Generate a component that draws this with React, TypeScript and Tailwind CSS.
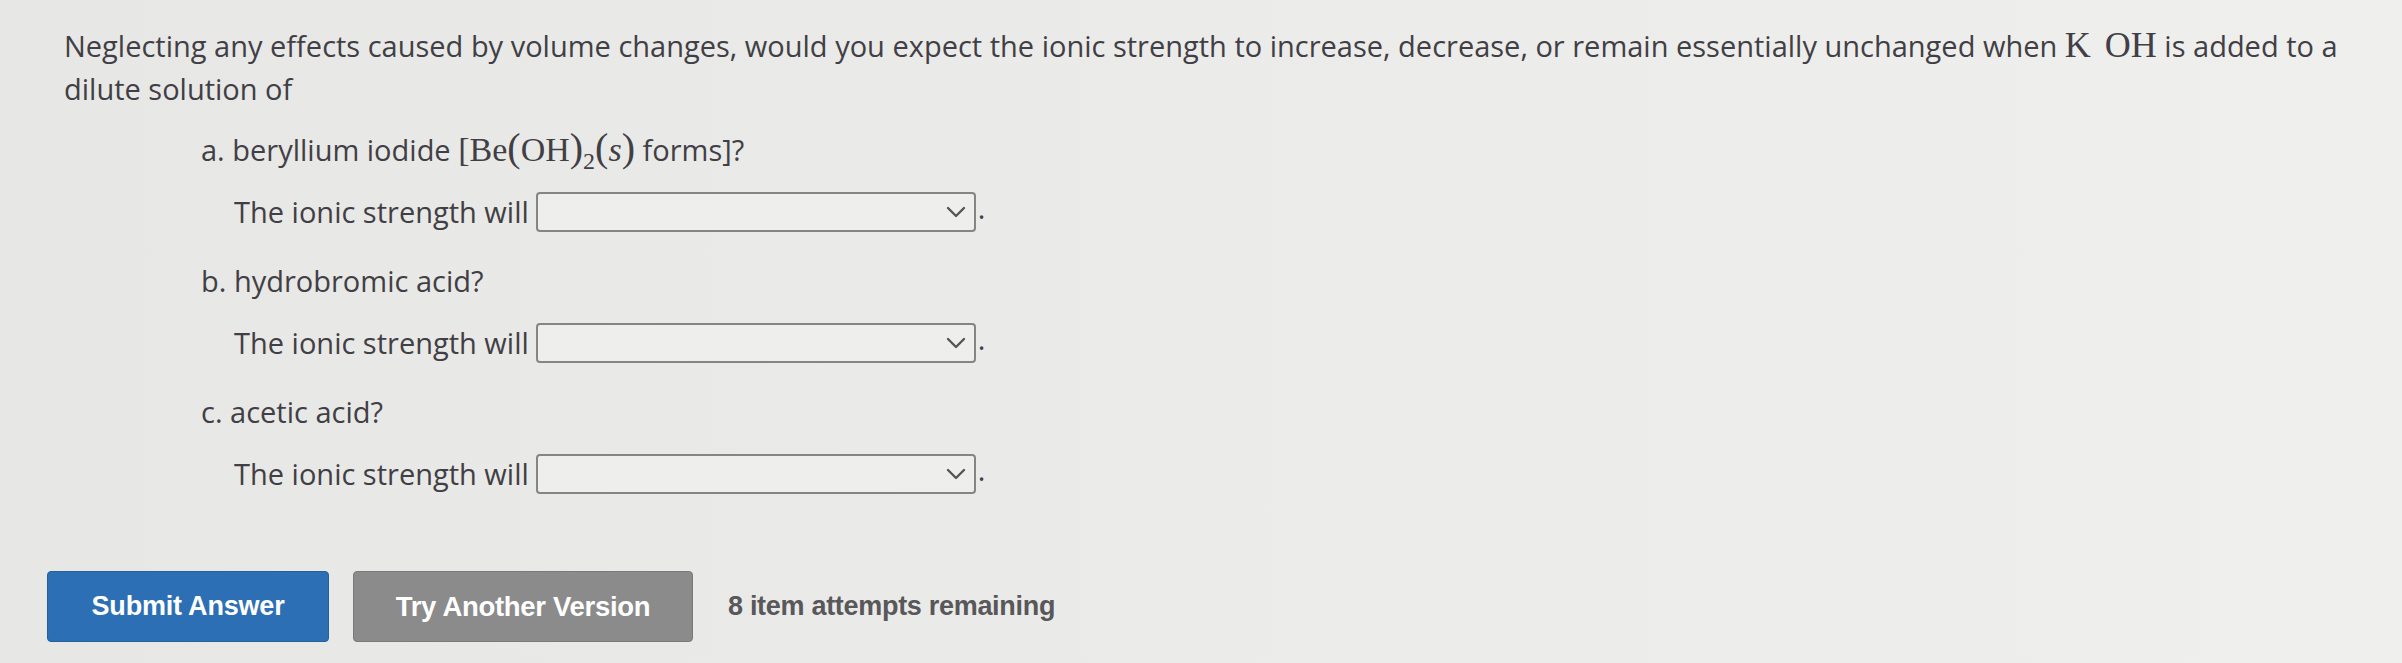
import React from "react";

const Chevron = () => (
  <svg width="20" height="12" viewBox="0 0 20 12" className="shrink-0">
    <polyline points="2,2 10,10 18,2" fill="none" stroke="#555558" strokeWidth="2.4" strokeLinecap="round" strokeLinejoin="round" />
  </svg>
);

const Select = () => (
  <div className="ml-[7px] flex h-[40px] w-[440px] items-center justify-end rounded-[4px] border-2 border-[#858587] bg-[#eeeeec] pr-[8px]">
    <Chevron />
  </div>
);

const Row = () => (
  <div className="mt-[19px] flex h-[43px] items-center pl-[33px]">
    <span>The ionic strength will</span>
    <Select />
    <span className="ml-[2px] self-end pb-[4px]">.</span>
  </div>
);

const serif = { fontFamily: '"Liberation Serif", serif' };

export default function App() {
  return (
    <div
      className="h-[663px] w-full overflow-hidden bg-linear-to-r from-[#e7e7e5] via-[#ebebe9] to-[#efefed] pl-[47px] pt-[24px] text-[#413f45]"
      style={{ fontFamily: '"Open Sans", sans-serif' }}
    >
      <div className="pl-[17px] text-[29px] leading-[43px]">
        <p>
          Neglecting any effects caused by volume changes, would you expect the ionic strength to increase, decrease, or remain essentially unchanged when{" "}
          <span className="text-[36px] leading-none" style={serif}>
            K<span className="ml-[14px]">OH</span>
          </span>{" "}
          is added to a
          <br />
          dilute solution of
        </p>

        <div className="pl-[137px]">
          <div className="mt-[18px] h-[43px] whitespace-nowrap">
            a. beryllium iodide{" "}
            <span className="text-[34px] leading-none" style={serif}>
              [Be<span className="text-[40px] leading-none">(</span>OH<span className="text-[40px] leading-none">)</span>
              <span className="relative top-[8px] text-[24px] leading-none">2</span>
              <span className="text-[40px] leading-none">(</span>
              <span className="italic">s</span>
              <span className="text-[40px] leading-none">)</span>
            </span>{" "}
            forms]?
          </div>
          <Row />

          <div className="mt-[26px] flex h-[43px] items-center">b. hydrobromic acid?</div>
          <Row />

          <div className="mt-[26px] flex h-[43px] items-center">c. acetic acid?</div>
          <Row />
        </div>
      </div>

      <div className="mt-[76px] flex items-center" style={{ fontFamily: '"Liberation Sans", Arial, sans-serif' }}>
        <button className="flex h-[71px] w-[282px] items-center justify-center rounded-[4px] border border-[#24609e] bg-[#2d6fb4] text-[27px] font-bold tracking-[-0.2px] text-white">
          Submit Answer
        </button>
        <button className="ml-[24px] flex h-[71px] w-[340px] items-center justify-center rounded-[4px] border border-[#7a7a7a] bg-[#8b8b8c] text-[27.5px] font-bold tracking-[-0.3px] text-white">
          Try Another Version
        </button>
        <span className="ml-[35px] text-[27px] font-bold tracking-[-0.3px] text-[#58575a]">8 item attempts remaining</span>
      </div>
    </div>
  );
}
